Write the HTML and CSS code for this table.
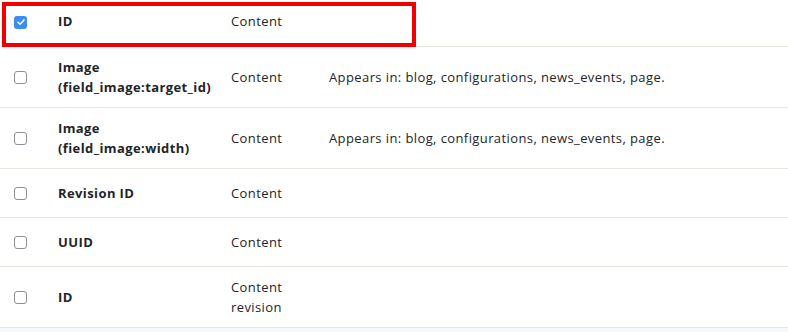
FILE: index.html
```html
<!DOCTYPE html>
<html>
<head>
<meta charset="utf-8">
<link rel="stylesheet" href="styles.css">
</head>
<body>
<div class="wrap">
  <table class="fields">
    <colgroup>
      <col class="c-check"><col class="c-name"><col class="c-type"><col class="c-desc">
    </colgroup>
    <tbody>
      <tr class="first">
        <td class="check"><span class="cb checked"><svg viewBox="0 0 12 12" width="12" height="12"><path d="M3 6.3 L5.1 8.3 L9 3.9" fill="none" stroke="#fff" stroke-width="1.5" stroke-linecap="round" stroke-linejoin="round"/></svg></span></td>
        <td class="name">ID</td>
        <td class="type">Content</td>
        <td class="desc"></td>
      </tr>
      <tr>
        <td class="check"><span class="cb"></span></td>
        <td class="name">Image (field_image:target_id)</td>
        <td class="type">Content</td>
        <td class="desc">Appears in: blog, configurations, news_events, page.</td>
      </tr>
      <tr>
        <td class="check"><span class="cb"></span></td>
        <td class="name">Image (field_image:width)</td>
        <td class="type">Content</td>
        <td class="desc">Appears in: blog, configurations, news_events, page.</td>
      </tr>
      <tr>
        <td class="check"><span class="cb"></span></td>
        <td class="name">Revision ID</td>
        <td class="type">Content</td>
        <td class="desc"></td>
      </tr>
      <tr>
        <td class="check"><span class="cb"></span></td>
        <td class="name">UUID</td>
        <td class="type">Content</td>
        <td class="desc"></td>
      </tr>
      <tr>
        <td class="check"><span class="cb"></span></td>
        <td class="name">ID</td>
        <td class="type">Content revision</td>
        <td class="desc"></td>
      </tr>
      <tr class="next">
        <td class="check"></td>
        <td class="name"></td>
        <td class="type"></td>
        <td class="desc"></td>
      </tr>
    </tbody>
  </table>
  <div class="highlight"></div>
</div>
</body>
</html>
```

FILE: styles.css
```css
html, body {
  margin: 0;
  padding: 0;
  background: #fff;
  overflow: hidden;
}
body {
  font-family: "Open Sans", "Liberation Sans", sans-serif;
  font-size: 13px;
  letter-spacing: 0.4px;
  color: #232429;
}
.wrap {
  position: relative;
  margin-top: -3px;
}
.fields {
  width: 100%;
  border-collapse: collapse;
  table-layout: fixed;
}
.c-check { width: 44px; }
.c-name { width: 173px; }
.c-type { width: 98px; }
.fields td {
  height: 49px;
  padding: 10px 0 10px 14px;
  line-height: 20px;
  vertical-align: middle;
  border-bottom: 1px solid #e6e4df;
  box-sizing: border-box;
}
.fields td.name {
  font-weight: 700;
}
.fields td.type {
  padding-right: 10px;
}
.fields tr.next td {
  background: #f3f9fd;
}
.cb {
  display: block;
  width: 11px;
  height: 11px;
  border: 1px solid #8d9097;
  border-radius: 3px;
  background: #fff;
  position: relative;
  top: 1px;
}
.cb.checked {
  width: 13px;
  height: 13px;
  border: none;
  background: #3b8cf3;
  display: flex;
  align-items: center;
  justify-content: center;
}
.highlight {
  position: absolute;
  left: 2px;
  top: 5px;
  width: 406px;
  height: 37px;
  border: 4px solid #f20000;
}
```
